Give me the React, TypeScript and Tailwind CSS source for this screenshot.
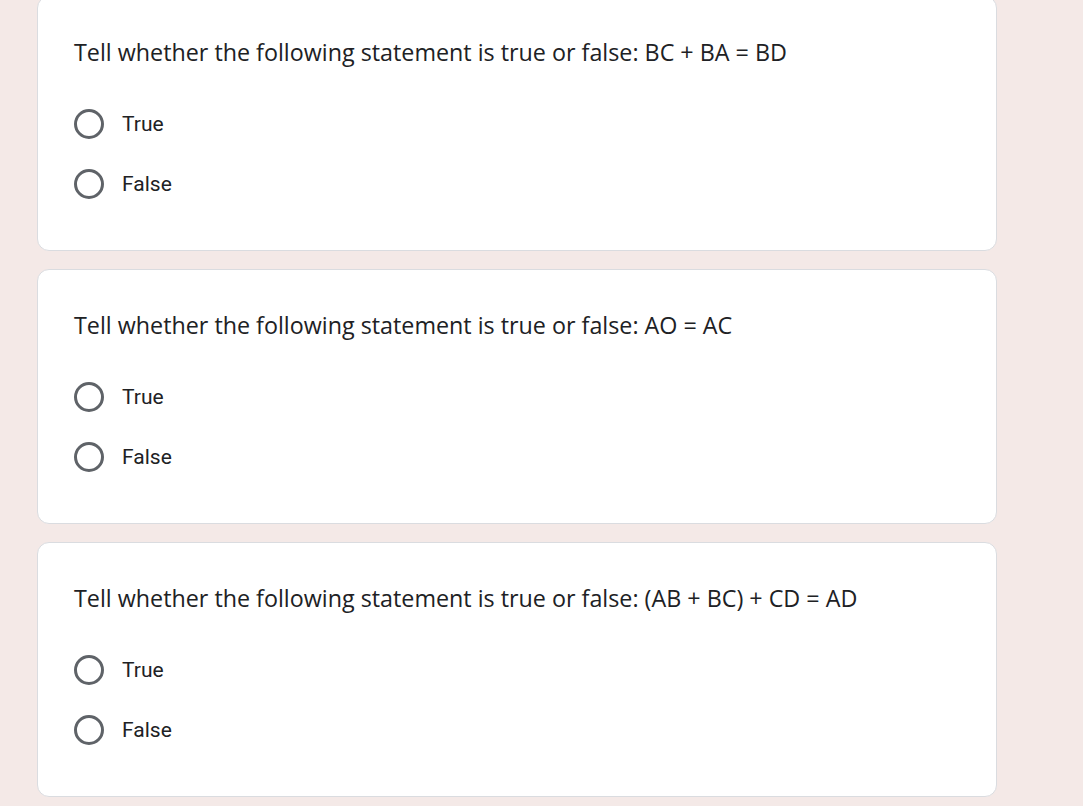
import React from "react";

const questions = [
  "Tell whether the following statement is true or false: BC + BA = BD",
  "Tell whether the following statement is true or false: AO = AC",
  "Tell whether the following statement is true or false: (AB + BC) + CD = AD",
];

function Radio({ label }: { label: string }) {
  return (
    <div className="flex h-[60px] items-center">
      <div className="h-[30px] w-[30px] rounded-full border-[3px] border-[#5f6368]" />
      <span
        className="ml-[18px] text-[21px] leading-[30px] text-[#202124]"
        style={{ fontFamily: "Roboto, 'Liberation Sans', sans-serif" }}
      >
        {label}
      </span>
    </div>
  );
}

export default function App() {
  return (
    <div className="h-[806px] w-[1083px] overflow-hidden bg-[#f4e9e7]">
      <div className="ml-[37px] mt-[-4px] flex w-[960px] flex-col gap-[18px]">
        {questions.map((q) => (
          <div
            key={q}
            className="h-[255px] rounded-[12px] border border-[#dadce0] bg-white px-[36px] pt-[37px]"
          >
            <div
              className="text-[23.3px] leading-[36px] text-[#202124]"
              style={{ fontFamily: "'Open Sans', sans-serif" }}
            >
              {q}
            </div>
            <div className="mt-[24px]">
              <Radio label="True" />
              <Radio label="False" />
            </div>
          </div>
        ))}
      </div>
    </div>
  );
}
